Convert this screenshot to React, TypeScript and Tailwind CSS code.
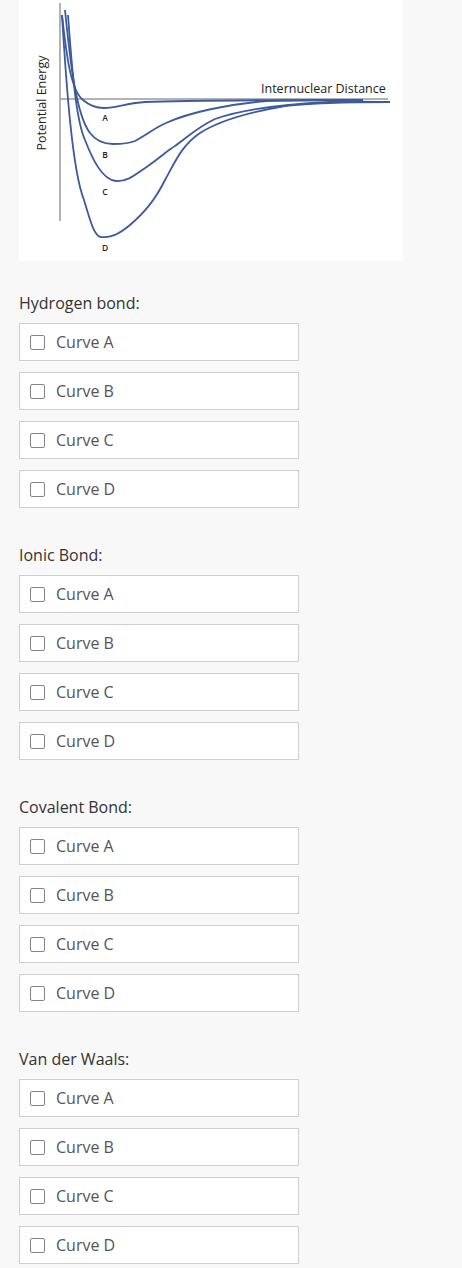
import React from 'react'

const sections = [
  { title: 'Hydrogen bond:' },
  { title: 'Ionic Bond:' },
  { title: 'Covalent Bond:' },
  { title: 'Van der Waals:' },
]

const options = ['Curve A', 'Curve B', 'Curve C', 'Curve D']

function EnergyChart() {
  const stroke = '#3c5a9c'
  return (
    <div className="w-[384px] h-[261px] bg-white">
      <svg width="384" height="261" viewBox="19 0 384 261" fill="none">
        {/* axes */}
        <line x1="60" y1="3" x2="60" y2="221" stroke="#9a9a9a" strokeWidth="1.5" />
        <line x1="60" y1="99" x2="388" y2="99" stroke="#9a9a9a" strokeWidth="1.5" />

        {/* curve A */}
        <path
          d="M62 15 C66 50 70 90 83 100 C90 106 96 108 104 108 C116 108 128 103 145 102 C190 100 240 100 363 100"
          stroke={stroke}
          strokeWidth="1.8"
        />
        {/* curve B */}
        <path
          d="M65 10 C70 60 76 115 90 133 C96 141 104 144 113 144 C120 144 128 144 135 141 C148 134 156 127 166 123 C190 112 230 104 267 101 C300 100 330 100 353 100"
          stroke={stroke}
          strokeWidth="1.8"
        />
        {/* curve C */}
        <path
          d="M68 15 C72 70 76 120 85 140 C92 158 102 180 116 181 C128 182 136 174 148 166 C162 156 168 150 175 146 C188 137 196 128 215 119 C245 108 290 104 330 102 C360 101 380 102 390 102"
          stroke={stroke}
          strokeWidth="1.8"
        />
        {/* curve D */}
        <path
          d="M62 15 C66 80 72 170 84 200 C90 220 94 236 101 237 C110 238 118 235 130 225 C145 212 155 200 165 180 C175 162 182 145 200 133 C220 120 250 112 285 106 C320 102 360 102 390 102"
          stroke={stroke}
          strokeWidth="1.8"
        />

        {/* labels */}
        <g fill="#222" fontFamily="'Open Sans', sans-serif" fontSize="8.5" fontWeight="600" textAnchor="middle">
          <text x="105" y="121">A</text>
          <text x="105" y="158">B</text>
          <text x="105" y="195">C</text>
          <text x="105" y="251">D</text>
        </g>
        <text x="261" y="93" fill="#222" fontFamily="'Open Sans', sans-serif" fontSize="12.5" fontWeight="500">
          Internuclear Distance
        </text>
        <text
          x="0"
          y="0"
          fill="#222"
          fontFamily="'Open Sans', sans-serif"
          fontSize="12.5"
          fontWeight="500"
          textAnchor="middle"
          transform="translate(46 103) rotate(-90)"
        >
          Potential Energy
        </text>
      </svg>
    </div>
  )
}

function Option({ label }: { label: string }) {
  return (
    <label className="w-[280px] h-[38px] flex items-center gap-[11px] px-[10px] bg-white border border-[#cfcfcf]">
      <span className="w-[15px] h-[15px] rounded-[2px] border border-[#858585] bg-white shrink-0" />
      <span className="text-[16px] text-[#555] leading-none">{label}</span>
    </label>
  )
}

export default function App() {
  return (
    <div
      className="min-h-[1268px] bg-[#f8f8f8] pl-[19px] pb-4"
      style={{ fontFamily: "'Open Sans', 'Liberation Sans', sans-serif" }}
    >
      <EnergyChart />
      <div className="mt-[30px] flex flex-col gap-[35px]">
        {sections.map((s) => (
          <div key={s.title}>
            <div className="text-[16px] leading-6 text-[#333] mb-2">{s.title}</div>
            <div className="flex flex-col gap-[11px]">
              {options.map((o) => (
                <Option key={o} label={o} />
              ))}
            </div>
          </div>
        ))}
      </div>
    </div>
  )
}
